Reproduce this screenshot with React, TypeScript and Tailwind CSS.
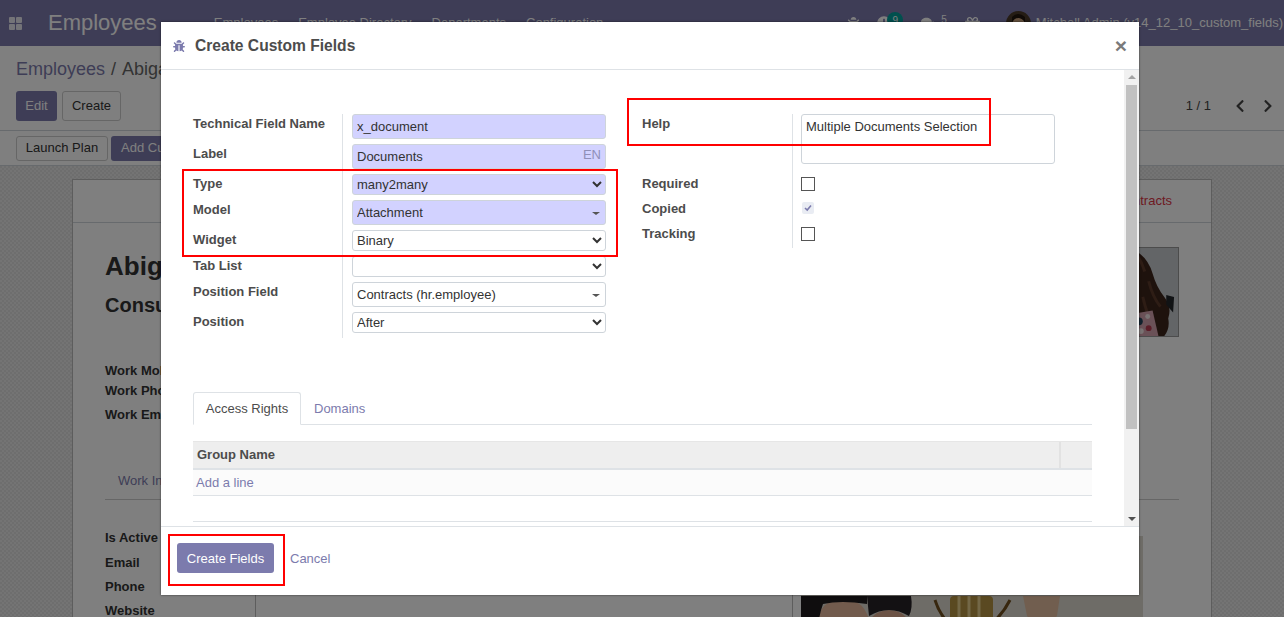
import { FaBug, FaChevronLeft, FaChevronRight, FaClock, FaComments, FaGift } from "react-icons/fa";

const font = "font-['Liberation_Sans',Arial,sans-serif]";

function NavBar() {
  return (
    <div className="flex h-[46px] items-center bg-[#7c7bad] text-[13px] text-white">
      <svg className="ml-[9px] h-[13px] w-[13px]" viewBox="0 0 13 13" fill="#e8e8f0">
        <rect x="0" y="0" width="6" height="6" rx="1" />
        <rect x="7" y="0" width="6" height="6" rx="1" />
        <rect x="0" y="7" width="6" height="6" rx="1" />
        <rect x="7" y="7" width="6" height="6" rx="1" />
      </svg>
      <span className="ml-[26px] text-[22px] leading-none">Employees</span>
      <div className="ml-[57px] flex gap-[20px]">
        <span>Employees</span>
        <span>Employee Directory</span>
        <span>Departments</span>
        <span>Configuration</span>
      </div>
      <div className="ml-auto flex items-center">
        <FaBug className="h-[13px] w-[13px]" />
        <div className="relative ml-[17.5px]">
          <FaClock className="h-[14px] w-[14px]" />
          <span className="absolute left-[10px] top-[-4px] flex h-[16px] w-[16px] items-center justify-center rounded-full bg-[#00a09d] text-[10px]">
            9
          </span>
        </div>
        <FaComments className="ml-[30px] h-[15px] w-[15px]" />
        <span className="ml-[5px] mt-[-8px] text-[10px]">5</span>
        <FaGift className="ml-[18.5px] h-[15px] w-[15px]" />
        <svg className="ml-[25.5px] h-[25px] w-[25px] rounded-full" viewBox="0 0 25 25">
          <rect width="25" height="25" fill="#4b3a2a" />
          <ellipse cx="12.5" cy="13" rx="6" ry="7.5" fill="#c9a27f" />
          <path d="M6 11 Q12 3 19 11 L19 6 Q12 0 6 6Z" fill="#21160e" />
          <path d="M8 11h4v2H8zM13 11h4v2h-4z" fill="#222" />
        </svg>
        <span className="ml-[5px] mr-[1px]">Mitchell Admin (v14_12_10_custom_fields)</span>
      </div>
    </div>
  );
}

function ControlPanel() {
  return (
    <div className="bg-white text-[13px]">
      <div className="border-b border-[#ced4da] px-[16px] pb-[9px] pt-[11px]">
        <div className="flex text-[18px] leading-[24px] text-[#7c7bad]">
          <span>Employees</span>
          <span className="ml-[6px] text-[#666]">/</span>
          <span className="ml-[6px] text-[#666]">Abigail Peterson</span>
        </div>
        <div className="mt-[10px] flex items-center">
          <button className="h-[30px] w-[41px] rounded-[3px] bg-[#7c7bad] text-white">Edit</button>
          <button className="ml-[5px] h-[30px] w-[59px] rounded-[3px] border border-[#ccc] text-[#333]">Create</button>
          <span className="ml-auto text-[#444]">1 / 1</span>
          <FaChevronLeft className="ml-[22px] h-[14px] w-[14px] text-[#444]" />
          <FaChevronRight className="ml-[14px] mr-[-7px] h-[14px] w-[14px] text-[#444]" />
        </div>
      </div>
      <div className="flex h-[35px] items-center border-b border-[#ced4da] px-[16px]">
        <button className="h-[25px] w-[92px] rounded-[3px] border border-[#ccc] text-[#333]">Launch Plan</button>
        <button className="ml-[3px] h-[25px] w-[140px] rounded-[3px] bg-[#7c7bad] pl-[10px] text-left text-white">Add Custom Field</button>
      </div>
    </div>
  );
}

function EmployeeSheet() {
  return (
    <div className="bg-[repeating-conic-gradient(#e8e8e8_0_25%,#dddddd_0_50%)] bg-[length:4px_4px] px-[72px] pt-[13px]">
      <div className="h-[500px] border border-[#bbb] bg-white text-[13px] text-[#4c4c4c]">
        <div className="flex h-[43px] items-center justify-end border-b border-[#ced4da] pr-[39px] text-[#dc3545]">
          Contracts
        </div>
        <div className="flex justify-between px-[32px] pt-[24px]">
          <div>
            <div className="mt-[4px] text-[26px] font-bold leading-[30px] text-[#333]">Abigail Peterson</div>
            <div className="mt-[12px] text-[20px] font-bold leading-[24px] text-[#333]">Consultant</div>
            <div className="mt-[44px] font-bold leading-[20px] text-[#333]">Work Mobile</div>
            <div className="font-bold leading-[20px] text-[#333]">Work Phone</div>
            <div className="mt-[4px] font-bold leading-[20px] text-[#333]">Work Email</div>
          </div>
          <svg className="h-[90px] w-[90px] border border-[#999]" viewBox="0 0 90 90">
            <rect width="90" height="90" fill="#c6cbce" />
            <path d="M40 0 Q58 6 64 26 Q68 40 76 50 Q84 60 80 72 Q82 82 76 90 L40 90Z" fill="#3d241b" />
            <path d="M46 4 Q52 12 56 24 M60 34 Q64 50 72 60 M54 50 Q58 68 66 84" fill="none" stroke="#5c3a2b" strokeWidth="3" />
            <path d="M78 48 L86 50 L85 66 L78 58Z" fill="#23262b" />
            <path d="M40 68 L64 64 L70 90 L40 90Z" fill="#d4a3ae" />
            <circle cx="50" cy="75" r="4" fill="#24455a" />
            <circle cx="60" cy="82" r="3" fill="#b73a50" />
            <circle cx="59" cy="70" r="2.5" fill="#f3e6e6" />
            <circle cx="52" cy="85" r="3" fill="#f3e6e6" />
          </svg>
        </div>
        <div className="mx-[32px] mt-[38px] flex h-[37px] items-center border-b border-[#ccc] pl-[13px] text-[#7c7bad]">
          Work Information
        </div>
        <div className="mx-[32px] mt-[15px] flex">
          <div className="w-[151px] shrink-0 border-r border-[#bbb] font-bold text-[#333]">
            <div className="h-[25px] pt-[13px] leading-[20px]">Is Active</div>
            <div className="mt-[13px] h-[24px]">Email</div>
            <div className="h-[24px]">Phone</div>
            <div className="h-[24px]">Website</div>
          </div>
          <div className="ml-[536px] w-[10px] shrink-0 border-l border-[#bbb]" />
          <svg className="ml-[-1px] mt-[21px] h-[120px] w-[342px] shrink-0" viewBox="0 0 342 120">
            <rect width="342" height="120" fill="#dcd9cf" />
            <ellipse cx="42" cy="88" rx="26" ry="26" fill="#e4b79a" />
            <path d="M0 60 L66 60 L66 68 Q40 64 22 68 Q16 84 14 120 L0 120Z" fill="#1e1a1c" />
            <ellipse cx="88" cy="94" rx="22" ry="20" fill="#d8a78a" />
            <path d="M66 60 L110 60 Q112 72 108 80 Q88 68 68 80Z" fill="#272226" />
            <path d="M134 64 Q142 90 168 100 Q196 90 209 64" fill="none" stroke="#6e4d1c" strokeWidth="3" />
            <rect x="149" y="60" width="43" height="40" rx="4" fill="#b49342" />
            <path d="M158 60v38M168 60v40M178 60v38" stroke="#e6cf8c" strokeWidth="3" />
            <circle cx="169" cy="110" r="7" fill="#8b6a2a" />
            <path d="M222 60 L259 60 L256 80 Q240 96 226 80Z" fill="#e2bd9f" />
          </svg>
        </div>
      </div>
    </div>
  );
}

function Field({
  label,
  height,
  labelClass = "pt-[1px]",
  labelWidth = "w-[150px]",
  inputPad = "pl-[9px]",
  children,
}: {
  label: string;
  height: string;
  labelClass?: string;
  labelWidth?: string;
  inputPad?: string;
  children: React.ReactNode;
}) {
  return (
    <div className={`flex ${height}`}>
      <div className={`${labelWidth} ${labelClass} shrink-0 border-r border-[#dee2e6] text-[13px] font-bold leading-[18px] text-[#4c4c4c]`}>
        {label}
      </div>
      <div className={`w-[263px] shrink-0 ${inputPad}`}>{children}</div>
    </div>
  );
}

function TextBox({ value, filled, caret, lang }: { value: string; filled?: boolean; caret?: boolean; lang?: boolean }) {
  return (
    <div
      className={`relative flex h-[25px] w-[254px] items-center rounded-[3px] border border-[#ced4da] pl-[4px] text-[13px] text-[#333] ${
        filled ? "bg-[#d2d2ff]" : "bg-white"
      }`}
    >
      <input readOnly value={value} className="w-full bg-transparent outline-none" />
      {lang && <span className="absolute right-[4px] top-[0px] text-[13px] text-[#8f8fb8]">EN</span>}
      {caret && (
        <span className="absolute right-[5px] top-[11px] h-0 w-0 border-x-[4px] border-t-[3px] border-x-transparent border-t-[#555]" />
      )}
    </div>
  );
}

function Picker({ value, filled }: { value: string; filled?: boolean }) {
  return (
    <select
      value={value}
      onChange={() => {}}
      className={`block h-[21px] w-[254px] rounded-[3px] border border-[#ced4da] text-[13px] text-[#333] outline-none ${
        filled ? "bg-[#d2d2ff]" : "bg-white"
      }`}
    >
      <option value={value}>{value}</option>
    </select>
  );
}

function Check({ on }: { on?: boolean }) {
  if (on) {
    return (
      <div className="ml-[1px] flex h-[12px] w-[12px] items-center justify-center rounded-[2px] bg-[#e9ecf3]">
        <svg className="h-[8px] w-[8px]" viewBox="0 0 8 8" fill="none" stroke="#7c7bad" strokeWidth="1.6">
          <path d="M1 4 L3.2 6 L7 1.5" />
        </svg>
      </div>
    );
  }
  return <div className="h-[14px] w-[14px] border border-[#555] bg-white" />;
}

function CustomFieldsDialog() {
  return (
    <div className={`absolute left-[161px] top-[22px] flex h-[573px] w-[978px] flex-col bg-white shadow-[0_0_2px_rgba(0,0,0,0.6)] ${font}`}>
      <div className="flex h-[48px] shrink-0 items-center border-b border-[#dee2e6] pl-[12px] pr-[12px]">
        <FaBug className="h-[12px] w-[12px] text-[#7c7bad]" />
        <span className="ml-[10px] text-[15.6px] font-bold text-[#4c4c4c]">Create Custom Fields</span>
        <span className="ml-auto text-[21px] font-bold leading-none text-[#7a7a7a]">×</span>
      </div>
      <div className="flex min-h-0 flex-1">
        <div className="min-w-0 flex-1 overflow-hidden pl-[32px] pr-[32px] pt-[44px]">
          <div className="flex">
            <div className="w-[449px] shrink-0">
              <Field label="Technical Field Name" height="h-[30px]">
                <TextBox value="x_document" filled />
              </Field>
              <Field label="Label" height="h-[30px]">
                <TextBox value="Documents" filled lang />
              </Field>
              <Field label="Type" height="h-[26px]">
                <Picker value="many2many" filled />
              </Field>
              <Field label="Model" height="h-[30px]">
                <TextBox value="Attachment" filled caret />
              </Field>
              <Field label="Widget" height="h-[26px]">
                <Picker value="Binary" />
              </Field>
              <Field label="Tab List" height="h-[26px]">
                <Picker value="" />
              </Field>
              <Field label="Position Field" height="h-[30px]">
                <TextBox value="Contracts (hr.employee)" caret />
              </Field>
              <Field label="Position" height="h-[26px]">
                <Picker value="After" />
              </Field>
            </div>
            <div>
              <Field label="Help" height="h-[57px]" labelWidth="w-[151px]" inputPad="pl-[8px]">
                <div className="h-[50px] w-[254px] rounded-[3px] border border-[#ced4da] pl-[4px] pt-[4px] text-[13px] leading-[16px] text-[#333]">
                  Multiple Documents Selection
                </div>
              </Field>
              <Field label="Required" height="h-[25px]" labelClass="pt-[4px]" labelWidth="w-[151px]" inputPad="pl-[8px]">
                <div className="pt-[6px]"><Check /></div>
              </Field>
              <Field label="Copied" height="h-[25px]" labelClass="pt-[4px]" labelWidth="w-[151px]" inputPad="pl-[8px]">
                <div className="pt-[6px]"><Check on /></div>
              </Field>
              <Field label="Tracking" height="h-[27px]" labelClass="pt-[4px]" labelWidth="w-[151px]" inputPad="pl-[8px]">
                <div className="pt-[6px]"><Check /></div>
              </Field>
            </div>
          </div>
          <div className="mt-[54px] flex h-[33px] border-b border-[#dee2e6] text-[13px]">
            <div className="h-[33px] w-[108px] rounded-t-[3px] border border-b-white border-[#dee2e6] bg-white text-center leading-[31px] text-[#4c4c4c]">
              Access Rights
            </div>
            <div className="ml-[13px] leading-[33px] text-[#7c7bad]">Domains</div>
          </div>
          <div className="mt-[16px] flex h-[29px] border-t border-b-[2px] border-[#dee2e6] border-t-[#e6e6e6] bg-[#eeeeee] text-[13px] font-bold text-[#4c4c4c]">
            <div className="flex-1 border-r-[2px] border-[#e2e2e2] pl-[4px] leading-[26px]">Group Name</div>
            <div className="w-[31px]" />
          </div>
          <div className="h-[26px] border-b border-[#dee2e6] bg-[#fbfbfb] pl-[3px] text-[13px] leading-[25px] text-[#7c7bad]">
            Add a line
          </div>
          <div className="mt-[25px] border-b border-[#dee2e6]" />
        </div>
        <div className="relative w-[15px] shrink-0 bg-[#f1f1f1]">
          <span className="absolute left-[4px] top-[5px] h-0 w-0 border-x-[4px] border-b-[4px] border-x-transparent border-b-[#a3a3a3]" />
          <div className="absolute left-[2px] top-[15px] h-[344px] w-[11px] bg-[#c1c1c1]" />
          <span className="absolute bottom-[5px] left-[4px] h-0 w-0 border-x-[4px] border-t-[4px] border-x-transparent border-t-[#505050]" />
        </div>
      </div>
      <div className="flex h-[69px] shrink-0 items-start border-t border-[#dee2e6] pl-[16px] pt-[16px] text-[13px]">
        <button className="h-[30px] w-[97px] rounded-[3px] bg-[#7c7bad] pt-[1px] text-white">Create Fields</button>
        <span className="ml-[16px] leading-[31px] text-[#7c7bad]">Cancel</span>
      </div>
      <div className="pointer-events-none absolute left-[21px] top-[147px] h-[88px] w-[436px] border-2 border-[#ff0000]" />
      <div className="pointer-events-none absolute left-[466px] top-[76px] h-[48px] w-[364px] border-2 border-[#ff0000]" />
      <div className="pointer-events-none absolute left-[7px] top-[512px] h-[52px] w-[117px] border-2 border-[#ff0000]" />
    </div>
  );
}

export default function App() {
  return (
    <div className={`relative h-[617px] w-full overflow-hidden ${font}`}>
      <NavBar />
      <ControlPanel />
      <EmployeeSheet />
      <div className="absolute inset-0 bg-black/50" />
      <CustomFieldsDialog />
    </div>
  );
}
